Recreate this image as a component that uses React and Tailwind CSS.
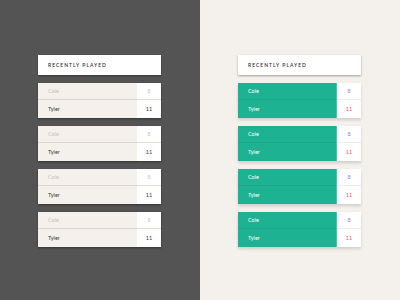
const games = [
  { a: 'Cole', b: 'Tyler', sa: 8, sb: 11 },
  { a: 'Cole', b: 'Tyler', sa: 8, sb: 11 },
  { a: 'Cole', b: 'Tyler', sa: 8, sb: 11 },
  { a: 'Cole', b: 'Tyler', sa: 8, sb: 11 },
];

function Header() {
  return (
    <div className="h-[20px] w-[123px] bg-white shadow-[0_1px_2px_rgba(0,0,0,0.35)] flex items-center pl-[10px] pt-[1px]">
      <span className="text-[5px] tracking-[0.2em] text-[#333] font-semibold">RECENTLY PLAYED</span>
    </div>
  );
}

function LightCard({ g }) {
  return (
    <div className="w-[123px] h-[35px] flex bg-white shadow-[0_1px_2px_rgba(0,0,0,0.4)]">
      <div className="w-[99px] bg-[#f4f0eb] flex flex-col">
        <div className="h-[17px] flex items-center pl-[10px] text-[5.5px] text-[#cbbfb3] border-b border-[#dcd5ce]">{g.a}</div>
        <div className="h-[18px] flex items-center pl-[10px] text-[5.5px] text-[#3a3a3a]">{g.b}</div>
      </div>
      <div className="flex-1 flex flex-col">
        <div className="h-[17px] flex items-center justify-center text-[5.5px] text-[#cbbfb3] border-b border-[#e2dcd6]">{g.sa}</div>
        <div className="h-[18px] flex items-center justify-center text-[5.5px] text-[#3a3a3a]">{g.sb}</div>
      </div>
    </div>
  );
}

function GreenCard({ g }) {
  return (
    <div className="w-[123px] h-[35px] flex bg-white shadow-[0_2px_3px_rgba(0,0,0,0.15)]">
      <div className="w-[99px] bg-[#1db392] border-r border-[#43c9a6] flex flex-col">
        <div className="h-[17px] flex items-center pl-[10px] text-[5.5px] text-white border-b border-[#19a586]">{g.a}</div>
        <div className="h-[18px] flex items-center pl-[10px] text-[5.5px] text-white">{g.b}</div>
      </div>
      <div className="flex-1 flex flex-col">
        <div className="h-[17px] flex items-center justify-center text-[5.5px] text-[#8b86d0] border-b border-[#eeeae6]">{g.sa}</div>
        <div className="h-[18px] flex items-center justify-center text-[5.5px] text-[#f2557a]">{g.sb}</div>
      </div>
    </div>
  );
}

export default function App() {
  return (
    <div className="w-[400px] h-[300px] flex font-['Lato',sans-serif]">
      <div className="w-[200px] h-full bg-[#545454] pt-[55px] pl-[38px] flex flex-col gap-[8px]">
        <Header />
        {games.map((g, i) => (
          <LightCard key={i} g={g} />
        ))}
      </div>
      <div className="w-[200px] h-full bg-[#f4f0ec] pt-[55px] pl-[38px] flex flex-col gap-[8px]">
        <Header />
        {games.map((g, i) => (
          <GreenCard key={i} g={g} />
        ))}
      </div>
    </div>
  );
}
